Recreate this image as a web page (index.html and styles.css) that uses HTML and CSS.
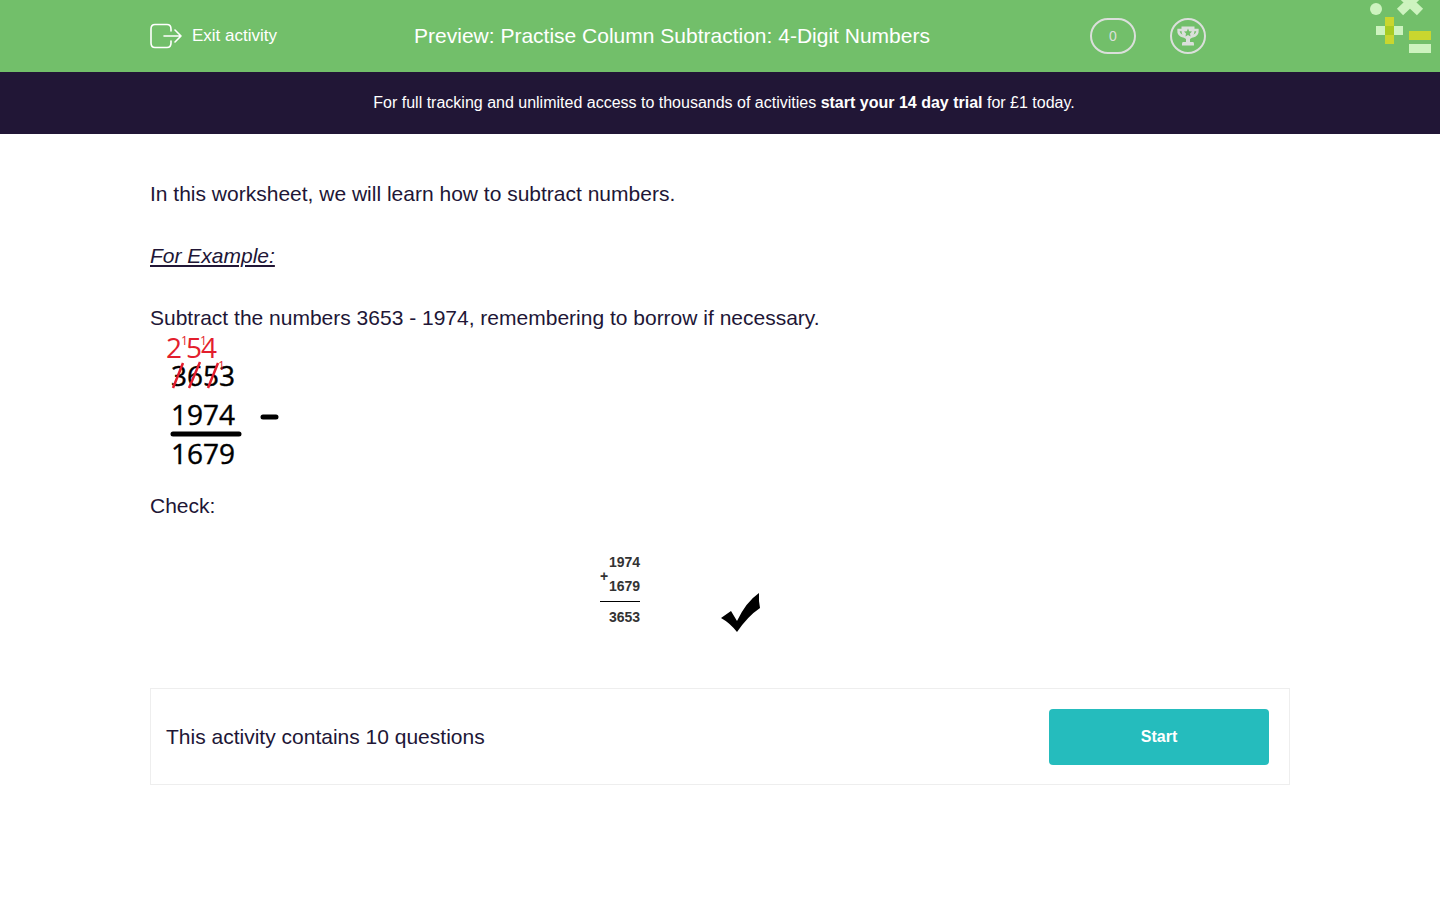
FILE: index.html
```html
<!DOCTYPE html>
<html lang="en">
<head>
<meta charset="utf-8">
<meta name="viewport" content="width=device-width, initial-scale=1">
<title>Practise Column Subtraction: 4-Digit Numbers</title>
<link rel="stylesheet" href="styles.css">
</head>
<body>
<header class="header">
  <div class="header-inner">
    <a class="exit" href="#">
      <svg class="exit-icon" viewBox="0 0 32 26" aria-hidden="true"><path d="M21 8V6Q21 1.500 17 1.500H5Q1 1.500 1 6V20Q1 24.500 5 24.500H17Q21 24.500 21 20V18M14 13H31M25 7L31 13L25 19"/></svg>
      <span>Exit activity</span>
    </a>
    <h1 class="title">Preview: Practise Column Subtraction: 4-Digit Numbers</h1>
    <div class="score">
      <span class="points">0</span>
      <button class="trophy" type="button" aria-label="Awards">
        <svg class="trophy-icon" viewBox="0 0 24 22" aria-hidden="true">
          <path class="trophy-handle" d="M6 5H2.500Q2 10 8 11.500M18 5H21.500Q22 10 16 11.500"/>
          <path class="trophy-cup" fill-rule="evenodd" d="M5.500 1.500H18.500V5Q18.500 12 14 14V17H17Q18 17 18 19V20.500H6V19Q6 17 7 17H10V14Q5.500 12 5.500 5ZM12 3.500L10.800 6.200L8 6.500L10 8.500L9.500 11.500L12 10.100L14.500 11.500L14 8.500L16 6.500L13.200 6.200Z"/>
        </svg>
      </button>
    </div>
  </div>
  <svg class="symbols" viewBox="0 0 70 60" aria-hidden="true">
    <circle class="pale" cx="6" cy="9" r="6"/>
    <path class="pale-line" d="M30 -7L50 12M50 -7L30 12"/>
    <path class="pale" d="M6 26H33V35H6Z"/>
    <path class="lime" d="M15 17H24V44H15ZM39 31H61V40H39Z"/>
    <path class="leaf" d="M15 26H24V35H15Z"/>
    <path class="pale" d="M39 44H61V53H39Z"/>
  </svg>
</header>
<div class="banner">For full tracking and unlimited access to thousands of activities&nbsp;<a class="trial" href="#">start your 14 day trial</a>&nbsp;for £1 today.</div>
<main class="main">
  <p class="line">In this worksheet, we will learn how to subtract numbers.</p>
  <p class="line"><em class="example">For Example:</em></p>
  <p class="line sum-intro">Subtract the numbers 3653 - 1974, remembering to borrow if necessary.</p>
  <svg class="working" viewBox="0 0 140 140" role="img" aria-label="3653 minus 1974 equals 1679, with borrowing">
    <g class="digits">
      <text x="21" y="52">3653</text>
      <text x="21" y="91">1974</text>
      <text x="21" y="130">1679</text>
    </g>
    <g class="borrowed">
      <text x="16" y="24">2</text><text x="36" y="24">5</text><text x="51" y="24">4</text>
      <g class="carry"><text x="31" y="11">1</text><text x="50" y="11">1</text><text x="68" y="36">1</text></g>
    </g>
    <path class="strike" d="M33 29L23 54M50 28L39 54M68 29L58 54"/>
    <path class="rule" d="M23 100H89M113 83H126"/>
  </svg>
  <p class="line check-label">Check:</p>
  <div class="check">
    <div class="addition">
      <span class="plus">+</span>
      <div class="addends"><span>1974</span><span>1679</span></div>
      <span class="total">3653</span>
    </div>
    <svg class="tick" viewBox="0 0 40 40" role="img" aria-label="Correct"><path d="M1 25L11 18L17 28Q26 9 39 0V8L40 15Q28 23 17 39Q10 30 1 25Z"/></svg>
  </div>
  <section class="start-panel">
    <p class="count">This activity contains 10 questions</p>
    <button class="start" type="button">Start</button>
  </section>
</main>
</body>
</html>
```
FILE: styles.css
```css
* { box-sizing: border-box; }
body {
  margin: 0;
  background: #fff;
  color: #211636;
  font-family: "Liberation Sans", Arial, sans-serif;
  font-size: 21px;
}
p, h1 { margin: 0; font-weight: 400; }
.header {
  position: relative;
  background: #72bf6a;
  color: #fff;
}
.header-inner {
  display: grid;
  grid-template-columns: 200px 1fr 200px;
  align-items: center;
  max-width: 1140px;
  min-height: 72px;
  margin: 0 auto;
}
.exit {
  display: flex;
  align-items: center;
  gap: 10px;
  color: inherit;
  font-size: 17px;
  text-decoration: none;
}
.exit-icon {
  width: 32px;
  height: 26px;
  fill: none;
  stroke: #fff;
  stroke-width: 1.6;
  stroke-linecap: round;
  stroke-linejoin: round;
}
.title {
  padding-right: 96px;
  font-size: 21px;
  text-align: center;
}
.score { display: flex; gap: 34px; }
.points, .trophy {
  display: flex;
  align-items: center;
  justify-content: center;
  height: 36px;
  border: 2px solid #dbdfdb;
  border-radius: 18px;
  color: #dbdfdb;
}
.points { width: 46px; font-size: 14px; }
.trophy { width: 36px; padding: 0; background: none; }
.trophy-icon { flex: none; width: 24px; height: 22px; }
.trophy-cup { fill: #dbdfdb; }
.trophy-handle { fill: none; stroke: #dbdfdb; stroke-width: 2.4; }
.symbols {
  position: absolute;
  top: 0;
  right: 0;
  width: 70px;
  height: 60px;
}
.pale { fill: #cdf3bf; }
.pale-line { stroke: #cdf3bf; stroke-width: 9; }
.lime { fill: #c9d62f; }
.leaf { fill: #a8cb22; }
.banner {
  padding: 20px 0 20px 8px;
  background: #211636;
  color: #fff;
  font-size: 16px;
  line-height: 22px;
  text-align: center;
}
.trial { color: inherit; font-weight: 700; text-decoration: none; }
.main {
  max-width: 1140px;
  margin: 0 auto;
  padding-top: 44px;
}
.line { margin-bottom: 31px; line-height: 31px; }
.example { text-decoration: underline; }
.sum-intro { margin-bottom: 1px; }
.check-label { margin-bottom: 29px; }
.working {
  display: block;
  width: 140px;
  height: 140px;
  margin-bottom: 16px;
  overflow: visible;
  font-family: "Open Sans", "Noto Sans", sans-serif;
  font-size: 28px;
}
.digits { stroke: #000; stroke-width: 0.4; }
.borrowed { fill: #e31e2d; }
.carry { font-size: 12px; }
.strike { stroke: #e31e2d; stroke-width: 2.5; }
.rule { stroke: #000; stroke-width: 5; stroke-linecap: round; }
.check {
  display: flex;
  align-items: flex-end;
  justify-content: center;
  gap: 80px;
  padding-right: 80px;
  color: #333;
  font-size: 14px;
  font-weight: 700;
}
.addition {
  display: grid;
  grid-template-columns: 9px auto;
  line-height: 24px;
}
.plus { align-self: center; line-height: 20px; }
.addends {
  display: flex;
  flex-direction: column;
  padding-bottom: 3px;
}
.total {
  grid-column: 1 / -1;
  padding: 3px 0 4px;
  border-top: 1px solid #000;
  text-align: right;
}
.tick { width: 40px; height: 40px; fill: #000; }
.start-panel {
  display: flex;
  align-items: center;
  justify-content: space-between;
  margin-top: 55px;
  padding: 20px 20px 19px 15px;
  border: 1px solid #eee;
}
.start {
  width: 220px;
  height: 56px;
  border: 0;
  border-radius: 4px;
  background: #25bcbd;
  color: #fff;
  font: 700 16px "Liberation Sans", Arial, sans-serif;
}
```
